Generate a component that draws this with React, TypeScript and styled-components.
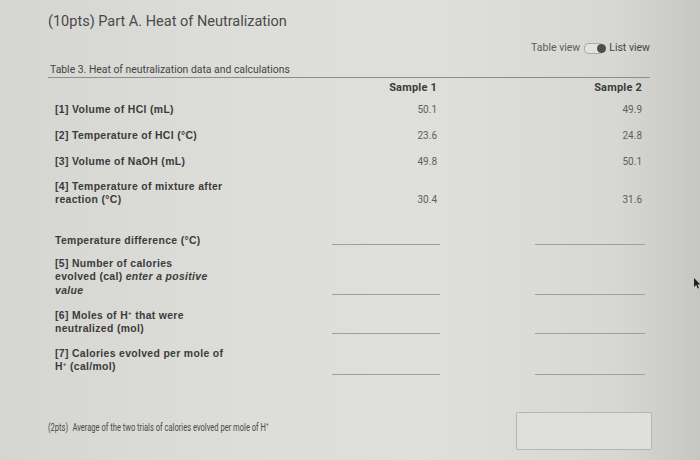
import React from "react";
import styled, { createGlobalStyle } from "styled-components";

const Global = createGlobalStyle`
  html, body { margin: 0; padding: 0; }
  body {
    width: 700px;
    height: 460px;
    overflow: hidden;
    font-family: Roboto, "Liberation Sans", Arial, sans-serif;
    background: linear-gradient(90deg, #d5d5d1 0%, #dcdcd8 30%, #dfdfdb 60%, #d7d8d4 88%, #c6c7c3 100%);
  }
`;

const Page = styled.div`
  position: relative;
  width: 700px;
  height: 460px;
  box-sizing: border-box;
  padding: 13px 50px 0 48px;
  display: flex;
  flex-direction: column;
`;

const Title = styled.h1`
  margin: 0;
  font-size: 14.5px;
  font-weight: 400;
  color: #4a4a4a;
  line-height: 18px;
`;

const ToggleRow = styled.div`
  display: flex;
  justify-content: flex-end;
  align-items: center;
  gap: 3px;
  margin-top: 10px;
  font-size: 10.5px;
  color: #555;
  line-height: 14px;
`;

const ToggleLabel = styled.span<{ $active?: boolean }>`
  color: ${(p) => (p.$active ? "#444" : "#5c5c5c")};
`;

const Track = styled.span`
  position: relative;
  width: 19px;
  height: 9px;
  border-radius: 5px;
  border: 1px solid #a9a9a6;
  border-right: none;
  background: #e2e2de;
  margin: 0 2px 0 1px;
`;

const Knob = styled.span`
  position: absolute;
  right: -2px;
  top: 0;
  width: 9px;
  height: 9px;
  border-radius: 50%;
  background: #4d4d4d;
`;

const Caption = styled.div`
  font-size: 10.4px;
  color: #444;
  margin-top: 9px;
  padding: 0 0 1px 2px;
  border-bottom: 1px solid #8d8d8a;
  line-height: 12px;
`;

const Grid = styled.div`
  display: grid;
  grid-template-columns: 284px 108px 95px 110px;
  align-items: end;
`;

const Row = styled(Grid)<{ $top: number }>`
  margin-top: ${(p) => p.$top}px;
`;

const HeadCell = styled.div`
  font-size: 11px;
  font-weight: 700;
  color: #3c3c3c;
  text-align: right;
  letter-spacing: 0.2px;
  line-height: 13px;
  padding-right: 3px;
`;

const Label = styled.div`
  font-family: "Liberation Sans", Arial, sans-serif;
  font-size: 10.4px;
  font-weight: 700;
  color: #3b3b3b;
  letter-spacing: 0.35px;
  line-height: 13.5px;
  padding-left: 7px;
  white-space: nowrap;
  i { font-style: italic; }
  sup { font-size: 6px; line-height: 0; vertical-align: 4px; }
`;

const Value = styled.div`
  font-size: 10px;
  color: #5e5e5e;
  text-align: right;
  padding-right: 3px;
  line-height: 13.5px;
`;

const Blank = styled.div<{ $drop?: number }>`
  border-bottom: 1.5px solid #9f9f9c;
  height: 0;
  margin-bottom: ${(p) => 2 - (p.$drop ?? 0)}px;
`;

const Footer = styled.div`
  display: flex;
  justify-content: space-between;
  align-items: center;
  margin-top: 38px;
`;

const FooterText = styled.div`
  font-size: 10.5px;
  color: #4a4a4a;
  display: flex;
  gap: 6px;
  padding-bottom: 7px;
  white-space: nowrap;
  transform: scaleX(0.72);
  transform-origin: left center;
  sup { font-size: 6.5px; line-height: 0; vertical-align: 4px; }
`;

const AnswerBox = styled.div`
  width: 134px;
  height: 36px;
  border: 1px solid #b5b5b2;
  border-radius: 2px;
  background: #dfe0dc;
  margin-right: -2px;
`;

const Cursor = styled.svg`
  position: absolute;
  left: 694px;
  top: 278px;
`;

const rows = [
  { label: "[1] Volume of HCl (mL)", a: "50.1", b: "49.9", top: 9 },
  { label: "[2] Temperature of HCl (°C)", a: "23.6", b: "24.8", top: 12.5 },
  { label: "[3] Volume of NaOH (mL)", a: "49.8", b: "50.1", top: 12.5 },
];

export default function App() {
  return (
    <>
      <Global />
      <Page>
        <Title>(10pts) Part A. Heat of Neutralization</Title>
        <ToggleRow>
          <ToggleLabel>Table view</ToggleLabel>
          <Track>
            <Knob />
          </Track>
          <ToggleLabel $active>List view</ToggleLabel>
        </ToggleRow>
        <Caption>Table 3. Heat of neutralization data and calculations</Caption>
        <Row $top={2.5}>
          <div />
          <HeadCell>Sample 1</HeadCell>
          <div />
          <HeadCell>Sample 2</HeadCell>
        </Row>
        {rows.map((r) => (
          <Row $top={r.top} key={r.label}>
            <Label>{r.label}</Label>
            <Value>{r.a}</Value>
            <div />
            <Value>{r.b}</Value>
          </Row>
        ))}
        <Row $top={11.5}>
          <Label>
            [4] Temperature of mixture after
            <br />
            reaction (°C)
          </Label>
          <Value>30.4</Value>
          <div />
          <Value>31.6</Value>
        </Row>
        <Row $top={27}>
          <Label>Temperature difference (°C)</Label>
          <Blank />
          <div />
          <Blank />
        </Row>
        <Row $top={9.5}>
          <Label>
            [5] Number of calories
            <br />
            evolved (cal) <i>enter a positive</i>
            <br />
            <i>value</i>
          </Label>
          <Blank />
          <div />
          <Blank />
        </Row>
        <Row $top={11.5}>
          <Label>
            [6] Moles of H<sup>+</sup> that were
            <br />
            neutralized (mol)
          </Label>
          <Blank />
          <div />
          <Blank />
        </Row>
        <Row $top={11}>
          <Label>
            [7] Calories evolved per mole of
            <br />
            H<sup>+</sup> (cal/mol)
          </Label>
          <Blank $drop={3} />
          <div />
          <Blank $drop={3} />
        </Row>
        <Footer>
          <FooterText>
            <span>(2pts)</span>
            <span>
              Average of the two trials of calories evolved per mole of H<sup>+</sup>
            </span>
          </FooterText>
          <AnswerBox />
        </Footer>
        <Cursor width="8" height="12" viewBox="0 0 8 12">
          <path d="M0 0 L0 9 L2.2 7 L3.8 10.5 L5 10 L3.5 6.6 L6.5 6.6 Z" fill="#222" />
        </Cursor>
      </Page>
    </>
  );
}
